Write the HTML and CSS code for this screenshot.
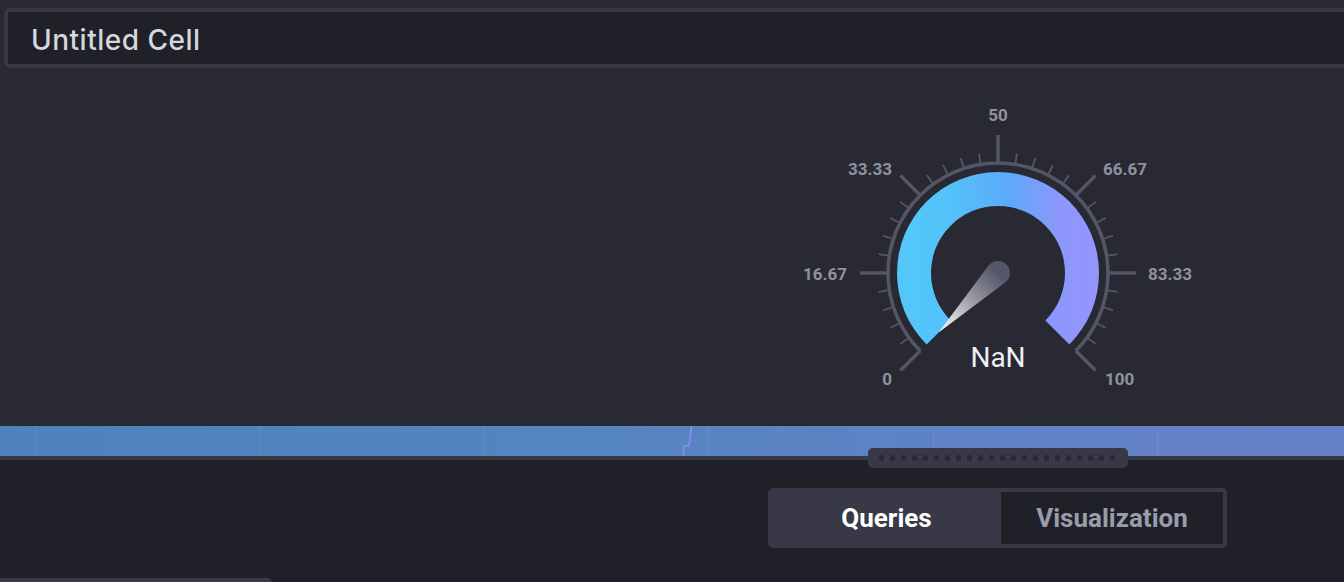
FILE: index.html
```html
<!DOCTYPE html>
<html>
<head>
<meta charset="utf-8">
<title>Cell Editor</title>
<link rel="stylesheet" href="styles.css">
</head>
<body>
<div class="editor">
  <div class="title-row">
    <div class="title-input">Untitled Cell</div>
  </div>

  <div class="gauge-panel">
    <svg class="gauge" width="1344" height="358" viewBox="0 0 1344 358">
      <defs>
        <linearGradient id="arcGrad" gradientUnits="userSpaceOnUse" x1="-101" y1="0" x2="101" y2="0">
          <stop offset="0" stop-color="#53c7fa"/>
          <stop offset="0.25" stop-color="#53c3fa"/>
          <stop offset="0.55" stop-color="#5da9f9"/>
          <stop offset="0.8" stop-color="#8d97fc"/>
          <stop offset="1" stop-color="#9495fc"/>
        </linearGradient>
        <linearGradient id="needleGrad" gradientUnits="userSpaceOnUse" x1="0" y1="0" x2="0" y2="-84">
          <stop offset="0" stop-color="#55566a"/>
          <stop offset="0.35" stop-color="#8a8b96"/>
          <stop offset="1" stop-color="#ffffff"/>
        </linearGradient>
      </defs>
      <g transform="translate(998,205)">
        <path class="band" d="M -71.42 71.42 A 101 101 0 1 1 71.42 71.42 L 47.38 47.38 A 67 67 0 1 0 -47.38 47.38 Z" fill="url(#arcGrad)"/>
        <path class="ring" d="M -77.78 77.78 A 110 110 0 1 1 77.78 77.78"/>
        <g class="ticks">
          <line class="major" x1="0" y1="-110" x2="0" y2="-138" transform="rotate(-135)"/>
          <line class="minor" x1="0" y1="-110" x2="0" y2="-121" transform="rotate(-126)"/>
          <line class="minor" x1="0" y1="-110" x2="0" y2="-121" transform="rotate(-117)"/>
          <line class="minor" x1="0" y1="-110" x2="0" y2="-121" transform="rotate(-108)"/>
          <line class="minor" x1="0" y1="-110" x2="0" y2="-121" transform="rotate(-99)"/>
          <line class="major" x1="0" y1="-110" x2="0" y2="-138" transform="rotate(-90)"/>
          <line class="minor" x1="0" y1="-110" x2="0" y2="-121" transform="rotate(-81)"/>
          <line class="minor" x1="0" y1="-110" x2="0" y2="-121" transform="rotate(-72)"/>
          <line class="minor" x1="0" y1="-110" x2="0" y2="-121" transform="rotate(-63)"/>
          <line class="minor" x1="0" y1="-110" x2="0" y2="-121" transform="rotate(-54)"/>
          <line class="major" x1="0" y1="-110" x2="0" y2="-138" transform="rotate(-45)"/>
          <line class="minor" x1="0" y1="-110" x2="0" y2="-121" transform="rotate(-36)"/>
          <line class="minor" x1="0" y1="-110" x2="0" y2="-121" transform="rotate(-27)"/>
          <line class="minor" x1="0" y1="-110" x2="0" y2="-121" transform="rotate(-18)"/>
          <line class="minor" x1="0" y1="-110" x2="0" y2="-121" transform="rotate(-9)"/>
          <line class="major" x1="0" y1="-110" x2="0" y2="-138" transform="rotate(0)"/>
          <line class="minor" x1="0" y1="-110" x2="0" y2="-121" transform="rotate(9)"/>
          <line class="minor" x1="0" y1="-110" x2="0" y2="-121" transform="rotate(18)"/>
          <line class="minor" x1="0" y1="-110" x2="0" y2="-121" transform="rotate(27)"/>
          <line class="minor" x1="0" y1="-110" x2="0" y2="-121" transform="rotate(36)"/>
          <line class="major" x1="0" y1="-110" x2="0" y2="-138" transform="rotate(45)"/>
          <line class="minor" x1="0" y1="-110" x2="0" y2="-121" transform="rotate(54)"/>
          <line class="minor" x1="0" y1="-110" x2="0" y2="-121" transform="rotate(63)"/>
          <line class="minor" x1="0" y1="-110" x2="0" y2="-121" transform="rotate(72)"/>
          <line class="minor" x1="0" y1="-110" x2="0" y2="-121" transform="rotate(81)"/>
          <line class="major" x1="0" y1="-110" x2="0" y2="-138" transform="rotate(90)"/>
          <line class="minor" x1="0" y1="-110" x2="0" y2="-121" transform="rotate(99)"/>
          <line class="minor" x1="0" y1="-110" x2="0" y2="-121" transform="rotate(108)"/>
          <line class="minor" x1="0" y1="-110" x2="0" y2="-121" transform="rotate(117)"/>
          <line class="minor" x1="0" y1="-110" x2="0" y2="-121" transform="rotate(126)"/>
          <line class="major" x1="0" y1="-110" x2="0" y2="-138" transform="rotate(135)"/>
        </g>
        <g class="labels">
          <text x="0" y="-152" text-anchor="middle">50</text>
          <text x="-106" y="-98" text-anchor="end">33.33</text>
          <text x="105" y="-98" text-anchor="start">66.67</text>
          <text x="-151" y="7" text-anchor="end">16.67</text>
          <text x="150" y="7" text-anchor="start">83.33</text>
          <text x="-106" y="112" text-anchor="end">0</text>
          <text x="107" y="112" text-anchor="start">100</text>
        </g>
        <path class="needle" transform="rotate(-135)" d="M -11.88 -1.71 L 0 -84 L 11.88 -1.71 A 12 12 0 1 1 -11.88 -1.71 Z" fill="url(#needleGrad)"/>
        <text class="value" x="0" y="94" text-anchor="middle">NaN</text>
      </g>
    </svg>
  </div>

  <div class="graph-strip">
    <svg class="strip" width="1344" height="30" viewBox="0 0 1344 30">
      <line class="grid" x1="35.5" y1="0" x2="35.5" y2="30"/>
      <line class="grid" x1="259.5" y1="0" x2="259.5" y2="30"/>
      <line class="grid" x1="483.5" y1="0" x2="483.5" y2="30"/>
      <line class="grid" x1="707.5" y1="0" x2="707.5" y2="30"/>
      <line class="grid" x1="933.5" y1="0" x2="933.5" y2="30"/>
      <line class="grid" x1="1157.5" y1="0" x2="1157.5" y2="30"/>
      <polyline class="series" points="683.5,30 683.8,20 689,20 691.5,0"/>
    </svg>
  </div>

  <div class="divider">
    <div class="handle">
      <span class="dot"></span><span class="dot"></span><span class="dot"></span><span class="dot"></span>
      <span class="dot"></span><span class="dot"></span><span class="dot"></span><span class="dot"></span>
      <span class="dot"></span><span class="dot"></span><span class="dot"></span><span class="dot"></span>
      <span class="dot"></span><span class="dot"></span><span class="dot"></span><span class="dot"></span>
      <span class="dot"></span><span class="dot"></span><span class="dot"></span><span class="dot"></span>
      <span class="dot"></span><span class="dot"></span>
    </div>
  </div>

  <div class="bottom">
    <div class="tabs-row">
      <div class="tabs">
        <div class="tab tab-queries active">Queries</div>
        <div class="tab tab-vis">Visualization</div>
      </div>
    </div>
    <div class="query-tab"></div>
  </div>
</div>
</body>
</html>
```

FILE: styles.css
```css
html, body {
  margin: 0;
  padding: 0;
}
body {
  width: 1344px;
  height: 582px;
  overflow: hidden;
  background: #292933;
  font-family: Roboto, "Liberation Sans", sans-serif;
}
.editor {
  height: 582px;
  overflow: hidden;
}
.title-row {
  padding: 8px 0 0 4px;
  height: 68px;
  box-sizing: border-box;
}
.title-input {
  box-sizing: border-box;
  height: 60px;
  margin-right: -20px;
  border: 4px solid #383846;
  border-radius: 6px;
  background: #202028;
  color: #d4d7dd;
  font-family: Inter, Roboto, sans-serif;
  font-weight: 500;
  font-size: 28px;
  letter-spacing: 0.5px;
  display: flex;
  align-items: center;
  padding: 3px 0 0 23px;
}
.gauge-panel {
  height: 358px;
}
.gauge {
  display: block;
}
.ring {
  fill: none;
  stroke: #545667;
  stroke-width: 3.5;
}
.ticks line {
  stroke: #545667;
}
.ticks .major {
  stroke-width: 3.5;
}
.ticks .minor {
  stroke-width: 1.8;
}
.labels text {
  fill: #8e91a1;
  font-family: Roboto, sans-serif;
  font-weight: 700;
  font-size: 17px;
}
.value {
  fill: #eeeff2;
  font-family: Roboto, sans-serif;
  font-size: 28px;
}
.graph-strip {
  height: 30px;
  background: linear-gradient(90deg, #4f82bc 0%, #5585bf 45%, #6082c6 75%, #6681c7 100%);
}
.strip {
  display: block;
}
.grid {
  stroke: rgba(255, 255, 255, 0.07);
  stroke-width: 1;
}
.series {
  fill: none;
  stroke: #8a8ef4;
  stroke-width: 1.6;
}
.divider {
  position: relative;
  height: 4px;
  background: #383846;
}
.handle {
  position: absolute;
  left: 868px;
  top: -8px;
  width: 260px;
  height: 20px;
  box-sizing: border-box;
  border-radius: 5px;
  background: #383846;
  display: flex;
  align-items: center;
  justify-content: center;
  gap: 6px;
  padding-right: 3px;
}
.dot {
  width: 5px;
  height: 6px;
  border-radius: 50%;
  background: #292933;
}
.bottom {
  height: 122px;
  overflow: hidden;
  background: #202028;
}
.tabs-row {
  display: flex;
  padding: 28px 0 0 768px;
}
.tabs {
  display: flex;
  height: 60px;
  box-sizing: border-box;
  border: 4px solid #383846;
  border-radius: 5px;
  background: #202028;
}
.tab {
  display: flex;
  align-items: center;
  justify-content: center;
  font-family: Roboto, sans-serif;
  font-weight: 700;
  font-size: 26px;
  color: #999dab;
}
.tab-queries {
  width: 229px;
}
.tab-vis {
  width: 222px;
}
.tab.active {
  background: #383846;
  color: #ffffff;
}
.query-tab {
  margin-top: 30px;
  width: 272px;
  height: 20px;
  background: #383846;
  border-radius: 0 5px 0 0;
}
```
